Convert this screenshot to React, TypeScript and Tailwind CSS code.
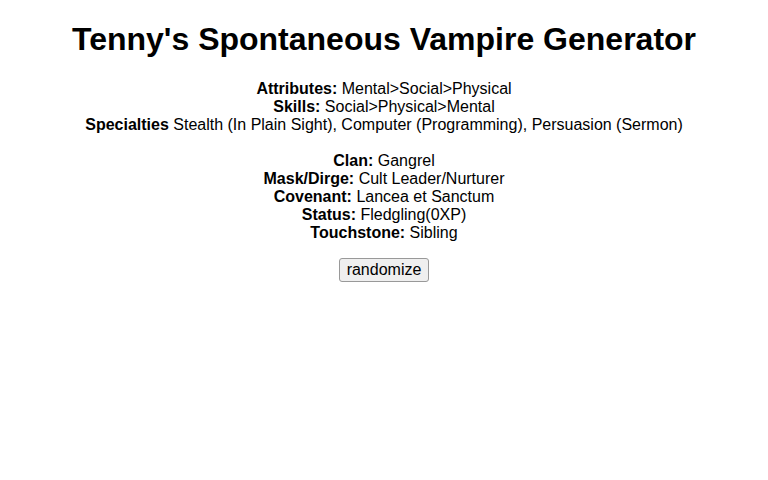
const stats = [
  { label: 'Attributes:', value: 'Mental>Social>Physical' },
  { label: 'Skills:', value: 'Social>Physical>Mental' },
  { label: 'Specialties', value: 'Stealth (In Plain Sight), Computer (Programming), Persuasion (Sermon)' },
];

const identity = [
  { label: 'Clan:', value: 'Gangrel' },
  { label: 'Mask/Dirge:', value: 'Cult Leader/Nurturer' },
  { label: 'Covenant:', value: 'Lancea et Sanctum' },
  { label: 'Status:', value: 'Fledgling(0XP)' },
  { label: 'Touchstone:', value: 'Sibling' },
];

function Line({ label, value }: { label: string; value: string }) {
  return (
    <div>
      <b className="font-bold">{label}</b> {value}
    </div>
  );
}

export default function App() {
  return (
    <div className="min-h-[480px] bg-white text-black text-center" style={{ fontFamily: '"Liberation Sans", Arial, sans-serif' }}>
      <h1 className="pt-[21px] pb-[22px] text-[32px] leading-[37px] font-bold">
        Tenny's Spontaneous Vampire Generator
      </h1>

      <div className="text-base leading-[18px]">
        {stats.map((s) => (
          <Line key={s.label} label={s.label} value={s.value} />
        ))}
        <div className="h-[18px]" />
        {identity.map((s) => (
          <Line key={s.label} label={s.label} value={s.value} />
        ))}
      </div>

      <div className="mt-[16px]">
        <button className="h-[24px] px-[7px] text-base leading-[20px] bg-[#efefef] border border-[#999] rounded-[3px] text-black">
          randomize
        </button>
      </div>
    </div>
  );
}
